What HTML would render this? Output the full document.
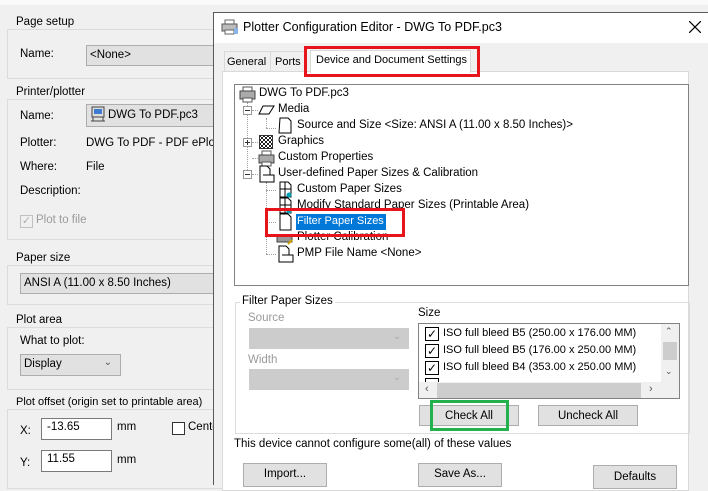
<!DOCTYPE html>
<html><head><meta charset="utf-8"><style>
*{margin:0;padding:0;box-sizing:border-box}
body{width:708px;height:485px;overflow:hidden;background:#f0f0f0;font-family:"Liberation Sans",sans-serif;font-size:11.5px;color:#000;position:relative}
.a{position:absolute;white-space:nowrap}
.g{position:absolute;border:1px solid #dcdcdc}
.gl{position:absolute;background:#f0f0f0;padding:0 2px}
.cb{position:absolute;background:#e1e1e1;border:1px solid #adadad}
.in{position:absolute;background:#fff;border:1px solid #7a7a7a}
.btn{position:absolute;background:#e1e1e1;border:1px solid #adadad;text-align:center;line-height:20px}
.dis{color:#9a9a9a}
.dot{position:absolute;border-color:#a0a0a0;border-style:dotted;border-width:0}
</style></head><body>
<div class="a" style="left:0;top:0;width:708px;height:5px;background:#fafafa"></div>
<!-- left panel -->
<div class="g" style="left:7px;top:29px;width:220px;height:50px"></div>
<div class="gl a" style="left:14px;top:16px">Page setup</div>
<div class="a" style="left:20px;top:48px">Name:</div>
<div class="cb" style="left:86px;top:45px;width:140px;height:21px;padding:3px 3px">&lt;None&gt;</div>

<div class="g" style="left:7px;top:99px;width:220px;height:141px"></div>
<div class="gl a" style="left:14px;top:86px">Printer/plotter</div>
<div class="a" style="left:20px;top:110px">Name:</div>
<div class="cb" style="left:86px;top:104px;width:140px;height:23px;padding:4px 0 0 21px">DWG To PDF.pc3</div>
<svg class="a" style="left:90px;top:106px" width="16" height="16"><rect x="2" y="1" width="12" height="10" fill="#ddd" stroke="#444"/><rect x="4" y="3" width="8" height="5" fill="#3c7bd0"/><path d="M3 11v4M13 11v4M1 15h14" stroke="#444"/></svg>
<div class="a" style="left:20px;top:137px">Plotter:</div>
<div class="a" style="left:86px;top:137px">DWG To PDF - PDF ePlot - l</div>
<div class="a" style="left:20px;top:161px">Where:</div>
<div class="a" style="left:86px;top:161px">File</div>
<div class="a" style="left:20px;top:185px">Description:</div>
<div class="a" style="left:20px;top:215px;width:13px;height:13px;border:1px solid #c0c0c0;background:#f0f0f0;color:#b0b0b0;font-size:11px;line-height:11px;text-align:center">✓</div>
<div class="a dis" style="left:36px;top:214px">Plot to file</div>

<div class="g" style="left:7px;top:265px;width:220px;height:40px"></div>
<div class="gl a" style="left:14px;top:252px">Paper size</div>
<div class="cb" style="left:20px;top:273px;width:200px;height:21px;padding:3px 3px">ANSI A (11.00 x 8.50 Inches)</div>

<div class="g" style="left:7px;top:327px;width:220px;height:63px"></div>
<div class="gl a" style="left:14px;top:314px">Plot area</div>
<div class="a" style="left:20px;top:335px">What to plot:</div>
<div class="cb" style="left:20px;top:354px;width:101px;height:22px;padding:3px 3px">Display<span style="position:absolute;right:8px;top:2px;color:#555;font-size:10px">&#8964;</span></div>

<div class="g" style="left:7px;top:409px;width:220px;height:80px"></div>
<div class="gl a" style="left:14px;top:396px;font-size:11px">Plot offset (origin set to printable area)</div>
<div class="a" style="left:20px;top:425px">X:</div>
<div class="in" style="left:41px;top:418px;width:71px;height:22px;padding:2px 5px">-13.65</div>
<div class="a" style="left:117px;top:421px">mm</div>
<div class="a" style="left:172px;top:422px;width:13px;height:13px;border:1px solid #333;background:#fff"></div>
<div class="a" style="left:188px;top:421px">Cente</div>
<div class="a" style="left:20px;top:457px">Y:</div>
<div class="in" style="left:41px;top:450px;width:71px;height:22px;padding:2px 5px">11.55</div>
<div class="a" style="left:117px;top:454px">mm</div>

<!-- dialog -->
<div class="a" style="left:213px;top:12px;width:495px;height:473px;background:#f0f0f0;border-left:1px solid #5a5a5a;border-top:1px solid #5a5a5a"></div>
<div class="a" style="left:214px;top:13px;width:494px;height:30px;background:#fff"></div>
<svg class="a" style="left:221px;top:19px" width="18" height="16"><rect x="4" y="1" width="9" height="5" fill="#fff" stroke="#666"/><rect x="1" y="5" width="15" height="7" fill="#bbb" stroke="#555"/><rect x="4" y="11" width="9" height="4" fill="#fff" stroke="#666"/><rect x="13" y="9" width="4" height="6" fill="#8ab4e8"/></svg>
<div class="a" style="left:243px;top:20px;font-size:12.5px">Plotter Configuration Editor - DWG To PDF.pc3</div>
<svg class="a" style="left:689px;top:21px" width="12" height="12"><path d="M0 0L12 12M12 0L0 12" stroke="#000" stroke-width="1.2"/></svg>

<!-- tabs -->
<div class="a" style="left:224px;top:51px;width:47px;height:21px;border:1px solid #d9d9d9;background:#f0f0f0;padding:4px 2px;font-size:11px">General</div>
<div class="a" style="left:270px;top:51px;width:35px;height:21px;border:1px solid #d9d9d9;background:#f0f0f0;padding:4px 4px;font-size:11px">Ports</div>
<div class="a" style="left:222px;top:71px;width:467px;height:420px;background:#fff;border:1px solid #d9d9d9"></div>
<div class="a" style="left:310px;top:50px;width:161px;height:23px;background:#fff;border:1px solid #d9d9d9;border-bottom:none;padding:3px 5px;font-size:11px">Device and Document Settings</div>
<div class="a" style="left:304px;top:46px;width:176px;height:31px;border:3px solid #e8141c"></div>

<!-- tree -->
<div class="a" style="left:234px;top:84px;width:455px;height:202px;border:1px solid #828282;background:#fff"></div>
<div class="dot" style="left:247px;top:102px;height:74px;border-left-width:1px"></div>
<div class="dot" style="left:266px;top:118px;height:10px;border-left-width:1px"></div>
<div class="dot" style="left:266px;top:128px;width:10px;border-top-width:1px"></div>
<div class="dot" style="left:266px;top:182px;height:72px;border-left-width:1px"></div>
<div class="dot" style="left:266px;top:190px;width:10px;border-top-width:1px"></div>
<div class="dot" style="left:266px;top:222px;width:10px;border-top-width:1px"></div>
<div class="dot" style="left:266px;top:254px;width:10px;border-top-width:1px"></div>
<div class="dot" style="left:252px;top:158px;width:6px;border-top-width:1px"></div>
<div class="dot" style="left:252px;top:110px;width:6px;border-top-width:1px"></div>
<div class="dot" style="left:252px;top:142px;width:6px;border-top-width:1px"></div>
<div class="dot" style="left:252px;top:174px;width:6px;border-top-width:1px"></div>
<svg class="a" style="left:243px;top:106px" width="9" height="9"><rect x=".5" y=".5" width="8" height="8" fill="#fff" stroke="#999"/><path d="M2 4.5h5" stroke="#333"/></svg>
<svg class="a" style="left:243px;top:138px" width="9" height="9"><rect x=".5" y=".5" width="8" height="8" fill="#fff" stroke="#999"/><path d="M2 4.5h5M4.5 2v5" stroke="#333"/></svg>
<svg class="a" style="left:243px;top:170px" width="9" height="9"><rect x=".5" y=".5" width="8" height="8" fill="#fff" stroke="#999"/><path d="M2 4.5h5" stroke="#333"/></svg>
<svg class="a" style="left:239px;top:86px" width="18" height="17"><rect x="4" y="1" width="9" height="5" fill="#fff" stroke="#555"/><rect x="1" y="5" width="15" height="8" fill="#aaa" stroke="#444"/><rect x="4" y="12" width="9" height="4" fill="#fff" stroke="#555"/></svg>
<div class="a" style="left:259px;top:87px">DWG To PDF.pc3</div>
<svg class="a" style="left:258px;top:104px" width="17" height="12"><path d="M5 2h11L11 10H1z" fill="none" stroke="#000"/></svg>
<div class="a" style="left:278px;top:103px">Media</div>
<svg class="a" style="left:277px;top:117px" width="17" height="17"><path d="M3 1h8l3 3v12H2z" fill="#fff" stroke="#000"/></svg>
<div class="a" style="left:297px;top:119px">Source and Size &lt;Size: ANSI A (11.00 x 8.50 Inches)&gt;</div>
<svg class="a" style="left:259px;top:135px" width="14" height="14"><defs><pattern id="ck" width="4" height="4" patternUnits="userSpaceOnUse"><rect width="2" height="2" fill="#222"/><rect x="2" y="2" width="2" height="2" fill="#222"/></pattern></defs><rect x=".5" y=".5" width="13" height="13" fill="url(#ck)" stroke="#333"/></svg>
<div class="a" style="left:278px;top:135px">Graphics</div>
<svg class="a" style="left:258px;top:150px" width="18" height="17"><rect x="4" y="1" width="9" height="5" fill="#fff" stroke="#555"/><rect x="1" y="5" width="15" height="8" fill="#aaa" stroke="#444"/><rect x="4" y="12" width="9" height="4" fill="#fff" stroke="#555"/></svg>
<div class="a" style="left:278px;top:151px">Custom Properties</div>
<svg class="a" style="left:258px;top:165px" width="17" height="18"><path d="M2 1h7l3 3v6h4v7H2z" fill="#fff" stroke="#000"/><path d="M5 10h7" stroke="#000"/></svg>
<div class="a" style="left:278px;top:167px">User-defined Paper Sizes &amp; Calibration</div>
<svg class="a" style="left:277px;top:181px" width="17" height="18"><path d="M3 1h8l3 3v12H3z" fill="#fff" stroke="#000"/><path d="M3 8h11M8 1v15" stroke="#000"/><circle cx="12" cy="14" r="2.5" fill="#00a0b0"/></svg>
<div class="a" style="left:297px;top:183px">Custom Paper Sizes</div>
<svg class="a" style="left:277px;top:197px" width="17" height="18"><path d="M3 1h8l3 3v12H3z" fill="#fff" stroke="#000"/><path d="M3 8h11M8 1v15" stroke="#000"/><circle cx="12" cy="14" r="2.5" fill="#00a0b0"/></svg>
<div class="a" style="left:297px;top:199px">Modify Standard Paper Sizes (Printable Area)</div>
<svg class="a" style="left:277px;top:213px" width="17" height="18"><path d="M3 1h8l3 3v13H3z" fill="#fff" stroke="#000"/></svg>
<div class="a" style="left:296px;top:214px;width:90px;height:16px;background:#0078d7;color:#fff;padding:1px 1px;font-size:11px">Filter Paper Sizes</div>
<svg class="a" style="left:276px;top:230px" width="18" height="17"><rect x="1" y="5" width="15" height="7" fill="#999" stroke="#444"/><path d="M12 14l4-4" stroke="#d0a000" stroke-width="2"/></svg>
<div class="a" style="left:297px;top:231px">Plotter Calibration</div>
<svg class="a" style="left:277px;top:245px" width="17" height="18"><path d="M2 1h7l3 3v6h4v7H2z" fill="#fff" stroke="#000"/><path d="M5 10h7" stroke="#000"/></svg>
<div class="a" style="left:297px;top:247px">PMP File Name &lt;None&gt;</div>
<div class="a" style="left:265px;top:208px;width:140px;height:29px;border:3px solid #e8141c"></div>

<!-- filter group -->
<div class="a" style="left:235px;top:302px;width:455px;height:132px;border:1px solid #dcdcdc"></div>
<div class="a" style="left:240px;top:295px;background:#fff;padding:0 2px">Filter Paper Sizes</div>
<div class="a dis" style="left:248px;top:312px">Source</div>
<div class="a" style="left:249px;top:328px;width:160px;height:21px;background:#ccc"><span style="position:absolute;right:8px;top:3px;color:#aaa;font-size:10px">&#8964;</span></div>
<div class="a dis" style="left:248px;top:354px">Width</div>
<div class="a" style="left:249px;top:369px;width:160px;height:21px;background:#ccc"><span style="position:absolute;right:8px;top:3px;color:#aaa;font-size:10px">&#8964;</span></div>
<div class="a" style="left:418px;top:307px">Size</div>
<div class="a" style="left:418px;top:323px;width:262px;height:76px;border:1px solid #828282;background:#fff;overflow:hidden;font-size:11px">
 <div class="a" style="left:6px;top:3px;width:14px;height:14px;border:1px solid #000;font-size:12px;line-height:12px;text-align:center">✓</div>
 <div class="a" style="left:24px;top:3px">ISO full bleed B5 (250.00 x 176.00 MM)</div>
 <div class="a" style="left:6px;top:20px;width:14px;height:14px;border:1px solid #000;font-size:12px;line-height:12px;text-align:center">✓</div>
 <div class="a" style="left:24px;top:20px">ISO full bleed B5 (176.00 x 250.00 MM)</div>
 <div class="a" style="left:6px;top:37px;width:14px;height:14px;border:1px solid #000;font-size:12px;line-height:12px;text-align:center">✓</div>
 <div class="a" style="left:24px;top:37px">ISO full bleed B4 (353.00 x 250.00 MM)</div>
 <div class="a" style="left:6px;top:54px;width:14px;height:6px;border:1px solid #000"></div>
 <div class="a" style="left:242px;top:0;width:18px;height:58px;background:#f0f0f0"></div>
 <div class="a" style="left:244px;top:18px;width:14px;height:18px;background:#cdcdcd"></div>
 <div class="a" style="left:246px;top:2px;font-size:9px;color:#555">&#8963;</div>
 <div class="a" style="left:246px;top:42px;font-size:9px;color:#555">&#8964;</div>
 <div class="a" style="left:0;top:58px;width:260px;height:17px;background:#f0f0f0"></div>
 <div class="a" style="left:18px;top:59px;width:204px;height:15px;background:#cdcdcd"></div>
 <div class="a" style="left:6px;top:59px;font-size:11px;color:#555">&lsaquo;</div>
 <div class="a" style="left:230px;top:59px;font-size:11px;color:#555">&rsaquo;</div>
 <div class="a" style="left:242px;top:58px;width:18px;height:17px;background:#f0f0f0"></div>
</div>
<div class="btn" style="left:419px;top:405px;width:100px;height:21px">Check All</div>
<div class="a" style="left:430px;top:400px;width:79px;height:31px;border:3px solid #22b14c"></div>
<div class="btn" style="left:538px;top:405px;width:100px;height:21px">Uncheck All</div>
<div class="a" style="left:234px;top:438px">This device cannot configure some(all) of these values</div>
<div class="btn" style="left:243px;top:463px;width:84px;height:24px">Import...</div>
<div class="btn" style="left:418px;top:463px;width:84px;height:24px">Save As...</div>
<div class="btn" style="left:593px;top:465px;width:84px;height:24px;line-height:22px">Defaults</div>
</body></html>
